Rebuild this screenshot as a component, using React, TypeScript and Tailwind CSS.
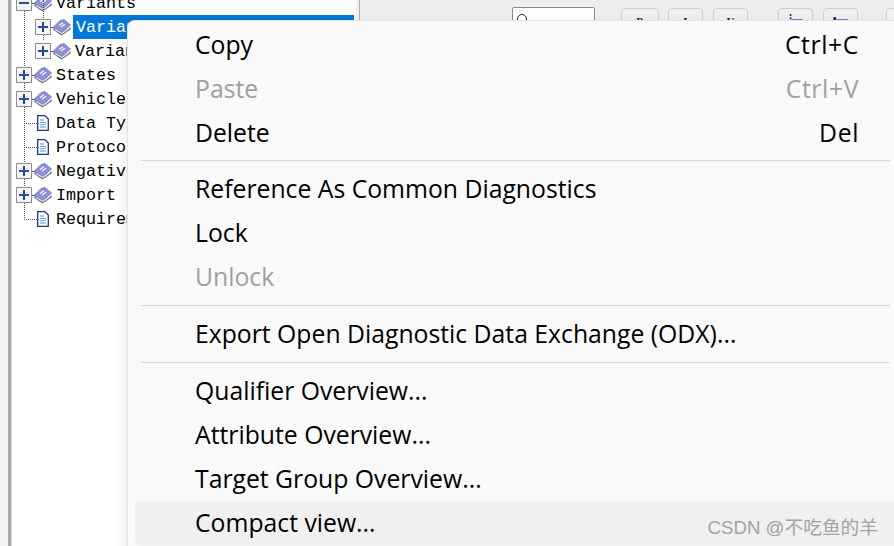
function Book() {
  return (
    <svg width="18" height="17" viewBox="0 0 18 17" className="shrink-0">
      <path d="M0.5 8 L7 1.5 L11 0.5 L17.5 6 L9.5 13 L3 11 Z" fill="#8d90d8" stroke="#6a6cb0" strokeWidth="0.7" />
      <path d="M0.5 8 L0.5 11 L8.5 16.5 L17.5 10.5 L17.5 8 L9.5 13.5 L3 11 Z" fill="#6e6e8e" />
      <path d="M2 10.5 L9 14.5 L16 9.5" stroke="#fff" strokeWidth="1" fill="none" />
      <path d="M6 6.5 L10 3.8 M8 8 L12 5.3" stroke="#fff" strokeWidth="1.1" />
    </svg>
  );
}

function Doc() {
  return (
    <svg width="12" height="16" viewBox="0 0 12 16" className="shrink-0">
      <path d="M0.7 0.7 H8 L11.3 4 V15.3 H0.7 Z" fill="#fff" stroke="#1f3a7a" strokeWidth="1.3" />
      <path d="M3 5 H7 M3 7.5 H9 M3 9.8 H9 M3 12 H9" stroke="#4f9ad8" strokeWidth="1.1" />
    </svg>
  );
}

function Box({ open = false }: { open?: boolean }) {
  return (
    <span className="relative z-10 flex h-[16px] w-[16px] shrink-0 items-center justify-center border border-[#8f8f8f] bg-[#f4f4f4]">
      <span className="absolute h-[2px] w-[10px] bg-[#2f4a94]" />
      {!open && <span className="absolute h-[10px] w-[2px] bg-[#2f4a94]" />}
    </span>
  );
}

function Row({ depth, expand, open, icon, label, selected }: { depth: number; expand?: boolean; open?: boolean; icon: "book" | "doc"; label: string; selected?: boolean }) {
  return (
    <div className={`flex h-[24px] items-center ${depth === 1 ? "pl-[23px]" : "pl-[4px]"}`}>
      {expand ? <Box open={open} /> : <span className="ml-[8px] h-0 w-[13px] shrink-0 border-t border-dotted border-[#555]" />}
      {expand && <span className="h-0 w-[2px] shrink-0 border-t border-dotted border-[#555]" />}
      <span className={`flex shrink-0 ${expand ? "w-[18px]" : "w-[12px]"}`}>{icon === "book" ? <Book /> : <Doc />}</span>
      <span className={`flex h-[24px] items-center whitespace-pre pr-[2px] ${selected ? "ml-[2px] w-[281px] bg-[#0078d7] pl-[3px] text-white" : expand ? "ml-[4px] text-black" : "ml-[7px] text-black"}`}>{label}</span>
    </div>
  );
}

function Tool({ w, ml, children }: { w: string; ml: string; children?: React.ReactNode }) {
  return <span className={`flex h-[20px] ${w} ${ml} shrink-0 justify-center rounded-[4px] border border-[#cfcfcf] bg-[#f0f0f0] pt-[7px] text-[11px] font-bold leading-none text-[#222]`}>{children}</span>;
}

function Item({ label, shortcut, disabled }: { label: string; shortcut?: string; disabled?: boolean }) {
  return (
    <div className={`flex h-[44px] items-center justify-between pl-[67px] pr-[38px] ${disabled ? "text-[#a0a0a0]" : "text-black"}`}>
      <span>{label}</span>
      {shortcut && <span className="tracking-[0.6px]">{shortcut}</span>}
    </div>
  );
}

function Sep({ first }: { first?: boolean }) {
  return <div className={`ml-[13px] mr-[7px] h-px bg-[#d9d9d9] ${first ? "mb-[6px] mt-[5px]" : "my-[6px]"}`} />;
}

export default function App() {
  return (
    <div className="relative flex h-[546px] w-[894px] overflow-hidden bg-[#f0f0f0]">
      <div className="flex w-[12px] shrink-0">
        <div className="w-[8px] bg-[#f4f4f4]" />
        <div className="w-[3px] bg-[#a8a8a8]" />
        <div className="w-[1px] bg-[#d8d8d8]" />
      </div>
      <div className="relative w-[344px] shrink-0 overflow-hidden bg-white font-['Liberation_Mono',monospace] text-[16.67px]">
        <div className="absolute left-[12px] top-0 h-[218px] w-0 border-l border-dotted border-[#555]" />
        <div className="absolute left-[31px] top-0 h-[40px] w-0 border-l border-dotted border-[#555]" />
        <div className="-mt-[9px]">
          <Row depth={0} expand open icon="book" label="Variants" />
          <Row depth={1} expand icon="book" label="Variant 1" selected />
          <Row depth={1} expand icon="book" label="Variant 2" />
          <Row depth={0} expand icon="book" label="States" />
          <Row depth={0} expand icon="book" label="Vehicle" />
          <Row depth={0} icon="doc" label="Data Types" />
          <Row depth={0} icon="doc" label="Protocol" />
          <Row depth={0} expand icon="book" label="Negative" />
          <Row depth={0} expand icon="book" label="Import" />
          <Row depth={0} icon="doc" label="Requirements" />
        </div>
      </div>
      <div className="w-[3px] shrink-0 bg-[#f0f0f0]" />
      <div className="w-[1px] shrink-0 bg-[#b0b0b0]" />
      <div className="flex flex-1 items-start bg-[#eeeeee] pl-[152px] pt-[8px] font-['Liberation_Serif',serif]">
        <span className="-mt-px flex h-[20px] w-[83px] shrink-0 items-start rounded-[2px] border border-[#8a8a8a] bg-white pl-[4px] pt-[6px]">
          <span className="h-[10px] w-[10px] rounded-full border border-[#223]" />
        </span>
        <Tool w="w-[38px]" ml="ml-[26px]">B</Tool>
        <Tool w="w-[35px]" ml="ml-[9px]">I</Tool>
        <Tool w="w-[35px]" ml="ml-[10px]">U</Tool>
        <Tool w="w-[35px]" ml="ml-[30px]"><span className="-mt-[3px] text-[#001a80]">⁝—</span></Tool>
        <Tool w="w-[35px]" ml="ml-[10px]"><span className="-mt-[3px] text-[#001a80]">▪—</span></Tool>
        <Tool w="w-[20px]" ml="ml-[28px]" />
      </div>

      <div className="absolute left-[127px] top-[20px] h-[540px] w-[770px] rounded-tl-[8px] border-l border-t border-[#e4e4e4] bg-[#f9f9f9] pt-[2px] font-['Open_Sans',sans-serif] text-[24.75px] shadow-[-6px_0_10px_rgba(0,0,0,0.05)]">
        <Item label="Copy" shortcut="Ctrl+C" />
        <Item label="Paste" shortcut="Ctrl+V" disabled />
        <Item label="Delete" shortcut="Del" />
        <Sep first />
        <Item label="Reference As Common Diagnostics" />
        <Item label="Lock" />
        <Item label="Unlock" disabled />
        <Sep />
        <Item label="Export Open Diagnostic Data Exchange (ODX)..." />
        <Sep />
        <Item label="Qualifier Overview..." />
        <Item label="Attribute Overview..." />
        <Item label="Target Group Overview..." />
        <div className="ml-[7px] rounded-[4px] bg-[#f0f0f0]">
          <div className="flex h-[44px] items-center pl-[60px] text-black">Compact view...</div>
        </div>
      </div>
      <div className="absolute bottom-[5px] right-[16px] font-['Liberation_Sans','Noto_Sans_CJK_SC',sans-serif] text-[18.7px] leading-[26px] text-[#a3a3a3]">CSDN @不吃鱼的羊</div>
    </div>
  );
}
